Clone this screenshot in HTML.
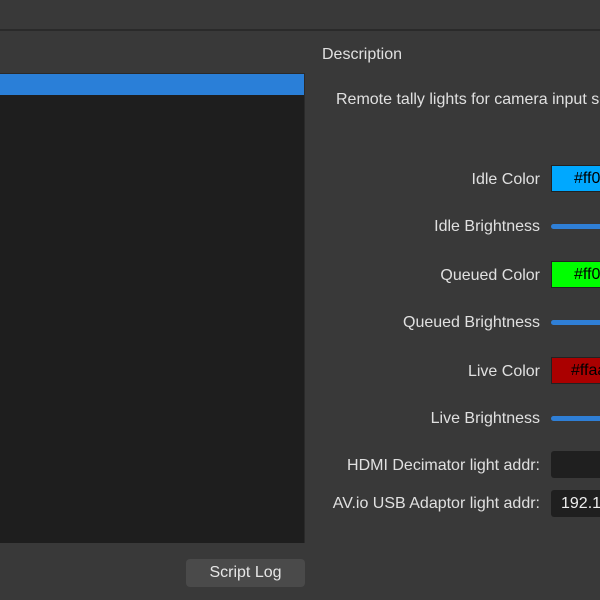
<!DOCTYPE html>
<html><head><style>
html,body{margin:0;width:600px;height:600px;overflow:hidden}
body{background:#393939;font-family:"Liberation Sans",sans-serif;color:#e0e0e0;position:relative;font-size:16px}
.a{position:absolute}
.lab{position:absolute;right:60px;text-align:right;white-space:nowrap}
.box{position:absolute;left:551px;width:49px;height:27px;border:1px solid #222;border-right:none;box-sizing:border-box;color:#000;font-size:16px;line-height:25px;padding-left:22px;white-space:nowrap;overflow:hidden}
.sl{position:absolute;left:551px;width:49px;height:5px;border-radius:3px 0 0 3px;background:#2f7fd6}
</style></head><body>
<div class="a" style="left:0;top:29px;width:600px;height:2px;background:#2a2a2a"></div>
<div class="a" style="left:0;top:73px;width:305px;height:470px;background:#1e1e1e;border-right:1px solid #2a2a2a;border-top:1px solid #2a2a2a;box-sizing:border-box"></div>
<div class="a" style="left:0;top:74px;width:304px;height:21px;background:#2a7fd8"></div>
<div class="a" style="left:186px;top:559px;width:119px;height:28px;background:#4a4a4a;border-radius:4px;text-align:center;line-height:28px;color:#e6e6e6">Script Log</div>
<div class="a" style="left:322px;top:46px">Description</div>
<div class="a" style="left:336px;top:91px;width:264px;white-space:nowrap;overflow:hidden">Remote tally lights for camera input sources</div>
<div class="lab" style="top:171px">Idle Color</div>
<div class="box" style="top:165px;background:#00a8ff">#ff0000</div>
<div class="lab" style="top:218px">Idle Brightness</div>
<div class="sl" style="top:224px"></div>
<div class="lab" style="top:267px">Queued Color</div>
<div class="box" style="top:261px;background:#00ff00">#ff00ff</div>
<div class="lab" style="top:314px">Queued Brightness</div>
<div class="sl" style="top:320px"></div>
<div class="lab" style="top:363px">Live Color</div>
<div class="box" style="top:357px;background:#aa0000;padding-left:19px">#ffaa00</div>
<div class="lab" style="top:410px">Live Brightness</div>
<div class="sl" style="top:416px"></div>
<div class="lab" style="top:457px">HDMI Decimator light addr:</div>
<div class="box" style="top:451px;background:#1f1f1f;border-radius:3px 0 0 3px;border:none;height:27px"></div>
<div class="lab" style="top:495px">AV.io USB Adaptor light addr:</div>
<div class="box" style="top:490px;background:#1f1f1f;border-radius:3px 0 0 3px;border:none;height:27px;color:#eee;padding-left:10px;line-height:27px">192.168.1.1</div>
</body></html>
